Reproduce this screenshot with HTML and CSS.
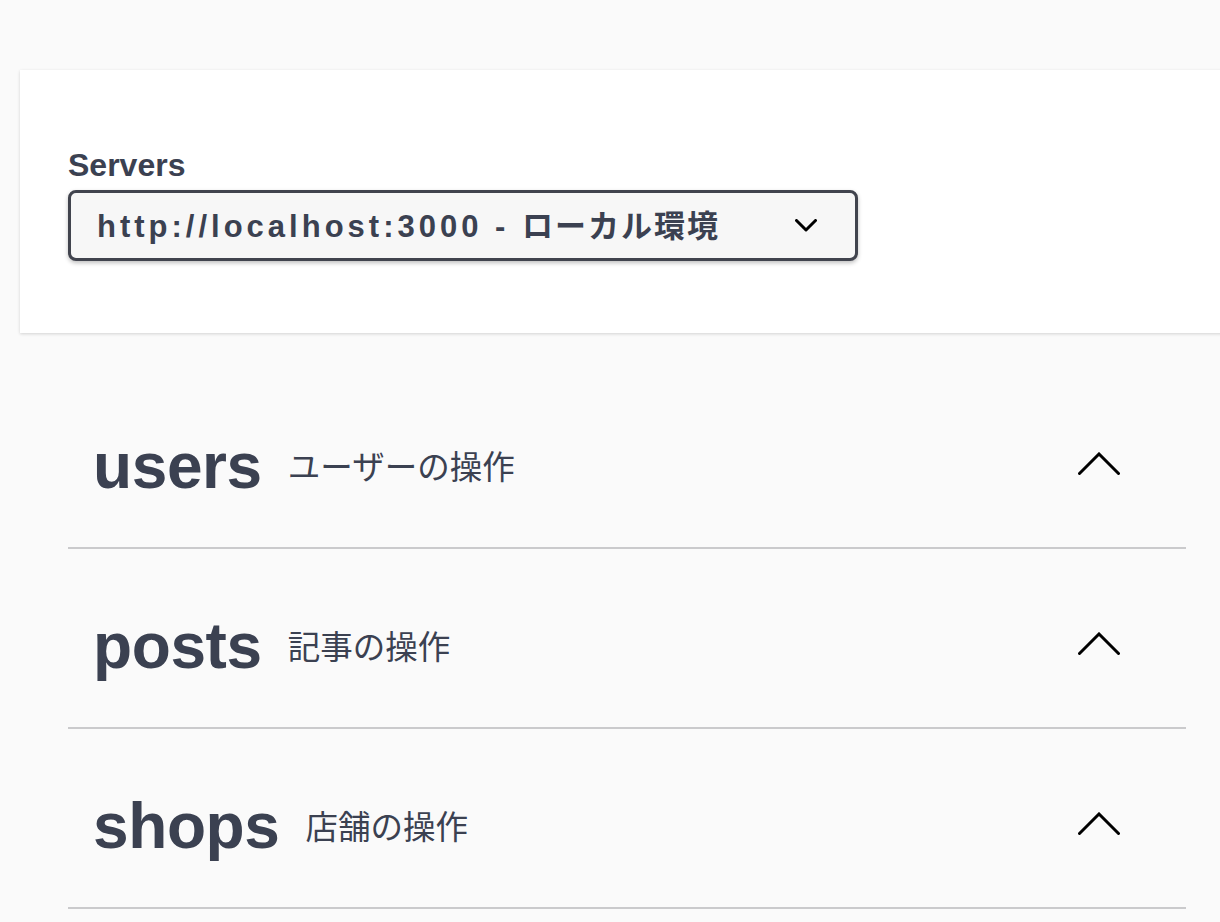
FILE: index.html
```html
<!DOCTYPE html>
<html lang="ja">
<head>
<meta charset="utf-8">
<title>API</title>
<link rel="stylesheet" href="styles.css">
</head>
<body>
<div class="page">
  <section class="scheme-container">
    <div class="servers">
      <label class="servers-title">Servers</label>
      <div class="select">
        <span class="select-text">http://localhost:3000 - <span class="ja">ローカル環境</span></span>
        <svg class="select-arrow" width="22" height="13" viewBox="0 0 22 13"><polyline points="1.5,1.5 11,11 20.5,1.5" fill="none" stroke="#000" stroke-width="3" stroke-linecap="round" stroke-linejoin="round"/></svg>
      </div>
    </div>
  </section>

  <div class="tags">
    <div class="tag">
      <h3 class="tag-name">users</h3>
      <span class="tag-desc">ユーザーの操作</span>
      <svg class="tag-arrow" width="42" height="23" viewBox="0 0 42 23"><polyline points="1.5,21.5 21,2 40.5,21.5" fill="none" stroke="#000" stroke-width="3" stroke-linecap="round"/></svg>
    </div>
    <div class="tag">
      <h3 class="tag-name">posts</h3>
      <span class="tag-desc">記事の操作</span>
      <svg class="tag-arrow" width="42" height="23" viewBox="0 0 42 23"><polyline points="1.5,21.5 21,2 40.5,21.5" fill="none" stroke="#000" stroke-width="3" stroke-linecap="round"/></svg>
    </div>
    <div class="tag">
      <h3 class="tag-name">shops</h3>
      <span class="tag-desc">店舗の操作</span>
      <svg class="tag-arrow" width="42" height="23" viewBox="0 0 42 23"><polyline points="1.5,21.5 21,2 40.5,21.5" fill="none" stroke="#000" stroke-width="3" stroke-linecap="round"/></svg>
    </div>
  </div>
</div>
</body>
</html>
```

FILE: styles.css
```css
html, body {
  margin: 0;
  padding: 0;
}

body {
  background: #fafafa;
  color: #3b4151;
  font-family: "Liberation Sans", "Noto Sans CJK JP", sans-serif;
  overflow: hidden;
  width: 1220px;
  height: 922px;
}

.page {
  padding-top: 70px;
}

.scheme-container {
  margin-left: 20px;
  width: 1240px;
  background: #fff;
  box-shadow: 0 1px 3px 0 rgba(0, 0, 0, 0.16);
  padding: 76px 0 72px 48px;
  box-sizing: border-box;
}

.servers {
  display: flex;
  flex-direction: column;
  align-items: flex-start;
  gap: 6px;
}

.servers-title {
  font-size: 32px;
  line-height: 38px;
  font-weight: 700;
  color: #3b4151;
}

.select {
  display: flex;
  align-items: center;
  width: 790px;
  height: 71px;
  box-sizing: border-box;
  border: 3px solid #41444e;
  border-radius: 8px;
  background: #f7f7f7;
  box-shadow: 0 2px 4px 0 rgba(0, 0, 0, 0.25);
  padding: 0 38px 0 26px;
}

.select-text {
  font-size: 31px;
  font-weight: 700;
  line-height: 36px;
  letter-spacing: 4px;
  white-space: nowrap;
  color: #3b4151;
}

.select-text .ja {
  font-family: "Noto Sans CJK JP", sans-serif;
  letter-spacing: 2px;
}

.select-arrow {
  margin-left: auto;
  flex: none;
}

.tags {
  margin: 36px 0 0 68px;
  width: 1118px;
}

.tag {
  display: flex;
  align-items: center;
  height: 180px;
  box-sizing: border-box;
  padding: 16px 66px 0 25px;
  border-bottom: 2px solid #cacacc;
}

.tag-name {
  margin: 0 26px 0 0;
  font-size: 64px;
  font-weight: 700;
  letter-spacing: -0.4px;
  color: #3b4151;
}

.tag-desc {
  font-family: "Noto Sans CJK JP", sans-serif;
  font-size: 32.5px;
  font-weight: 400;
  color: #3b4151;
  margin-bottom: 4px;
}

.tag-arrow {
  margin-left: auto;
  margin-bottom: 6px;
  flex: none;
}
```
